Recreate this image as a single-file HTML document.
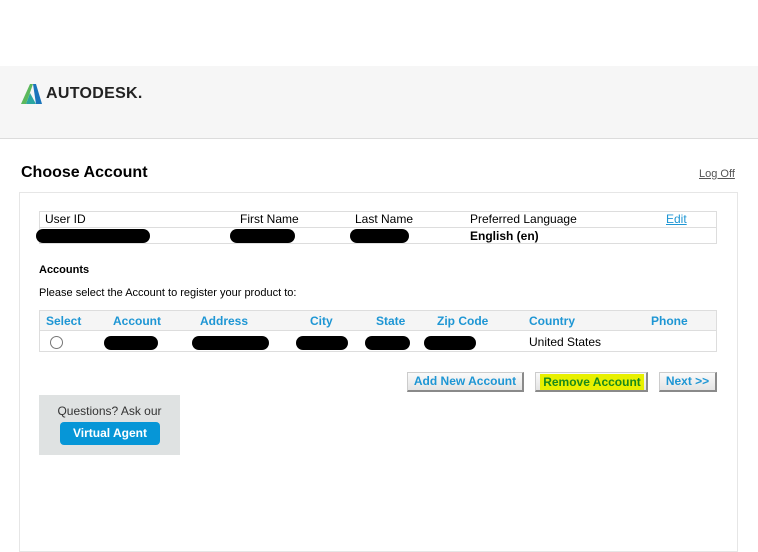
<!DOCTYPE html>
<html><head><style>
*{margin:0;padding:0;box-sizing:border-box}
body{width:758px;height:517px;background:#fff;position:relative;overflow:hidden;font-family:"Liberation Sans",Arial,sans-serif;font-size:12px;color:#000}
.a{position:absolute}
.blk{position:absolute;background:#000;border-radius:7px;height:14px}
.h{color:#1e96d4;font-weight:bold;font-size:12px;position:absolute}
.btn{position:absolute;height:20px;border:1px solid #ccc;border-right:2px solid #8a8a8a;border-bottom:2px solid #8a8a8a;background:linear-gradient(#fafafa,#e4e4e4);font-weight:bold;font-size:12px;color:#1e96d4;text-align:center;line-height:17px}
</style></head><body>
<div class="a" style="left:0;top:66px;width:758px;height:73px;background:#f6f6f6;border-bottom:1px solid #dcdcdc"></div>
<svg class="a" style="left:21px;top:84px" width="21" height="21" viewBox="0 0 21 21">
<polygon points="0,20 9,0 12,0 5,20" fill="#5cb85c"/>
<polygon points="12,0 15,0 21,20 15,20" fill="#1a74bb"/>
<polygon points="5,20 9,9 15,20" fill="#2aa6a0"/>
</svg>
<div class="a" style="left:46px;top:85px;font-size:16px;font-weight:bold;letter-spacing:0.3px;color:#222">AUTODESK.</div>
<div class="a" style="left:21px;top:164px;font-size:16px;font-weight:bold">Choose Account</div>
<div class="a" style="left:699px;top:168px;font-size:11px;color:#555;text-decoration:underline">Log Off</div>
<div class="a" style="left:19px;top:192px;width:719px;height:360px;border:1px solid #e6e6e6"></div>
<div class="a" style="left:39px;top:211px;width:678px;height:33px;border:1px solid #ddd"></div>
<div class="a" style="left:39px;top:227px;width:678px;height:1px;background:#ddd"></div>
<div class="a" style="left:45px;top:212px">User ID</div>
<div class="a" style="left:240px;top:212px">First Name</div>
<div class="a" style="left:355px;top:212px">Last Name</div>
<div class="a" style="left:470px;top:212px">Preferred Language</div>
<div class="a" style="left:666px;top:212px;color:#1e96d4;text-decoration:underline">Edit</div>
<div class="blk" style="left:36px;top:229px;width:114px"></div>
<div class="blk" style="left:230px;top:229px;width:65px"></div>
<div class="blk" style="left:350px;top:229px;width:59px"></div>
<div class="a" style="left:470px;top:229px;font-weight:bold">English (en)</div>
<div class="a" style="left:39px;top:264px;font-weight:bold;font-size:11px">Accounts</div>
<div class="a" style="left:39px;top:287px;font-size:11px">Please select the Account to register your product to:</div>
<div class="a" style="left:39px;top:310px;width:678px;height:42px;border:1px solid #ddd"></div>
<div class="a" style="left:40px;top:311px;width:676px;height:20px;background:#f5f5f5;border-bottom:1px solid #ddd"></div>
<div class="h" style="left:46px;top:314px">Select</div>
<div class="h" style="left:113px;top:314px">Account</div>
<div class="h" style="left:200px;top:314px">Address</div>
<div class="h" style="left:310px;top:314px">City</div>
<div class="h" style="left:376px;top:314px">State</div>
<div class="h" style="left:437px;top:314px">Zip Code</div>
<div class="h" style="left:529px;top:314px">Country</div>
<div class="h" style="left:651px;top:314px">Phone</div>
<div class="a" style="left:50px;top:336px;width:13px;height:13px;border:1px solid #777;border-radius:50%"></div>
<div class="blk" style="left:104px;top:336px;width:54px"></div>
<div class="blk" style="left:192px;top:336px;width:77px"></div>
<div class="blk" style="left:296px;top:336px;width:52px"></div>
<div class="blk" style="left:365px;top:336px;width:45px"></div>
<div class="blk" style="left:424px;top:336px;width:52px"></div>
<div class="a" style="left:529px;top:335px">United States</div>
<div class="btn" style="left:407px;top:372px;width:117px">Add New Account</div>
<div class="btn" style="left:535px;top:372px;width:113px;color:#1a8a1a;padding:1px 2px 0 4px"><div style="background:#e8f000;height:16px;line-height:16px">Remove Account</div></div>
<div class="btn" style="left:659px;top:372px;width:58px">Next &gt;&gt;</div>
<div class="a" style="left:39px;top:395px;width:141px;height:60px;background:#dfe2e2"></div>
<div class="a" style="left:39px;top:404px;width:141px;text-align:center;font-size:12px;color:#333">Questions? Ask our</div>
<div class="a" style="left:60px;top:422px;width:100px;height:23px;background:#0696d7;border-radius:4px;color:#fff;font-weight:bold;font-size:12px;text-align:center;line-height:23px">Virtual Agent</div>
</body></html>
